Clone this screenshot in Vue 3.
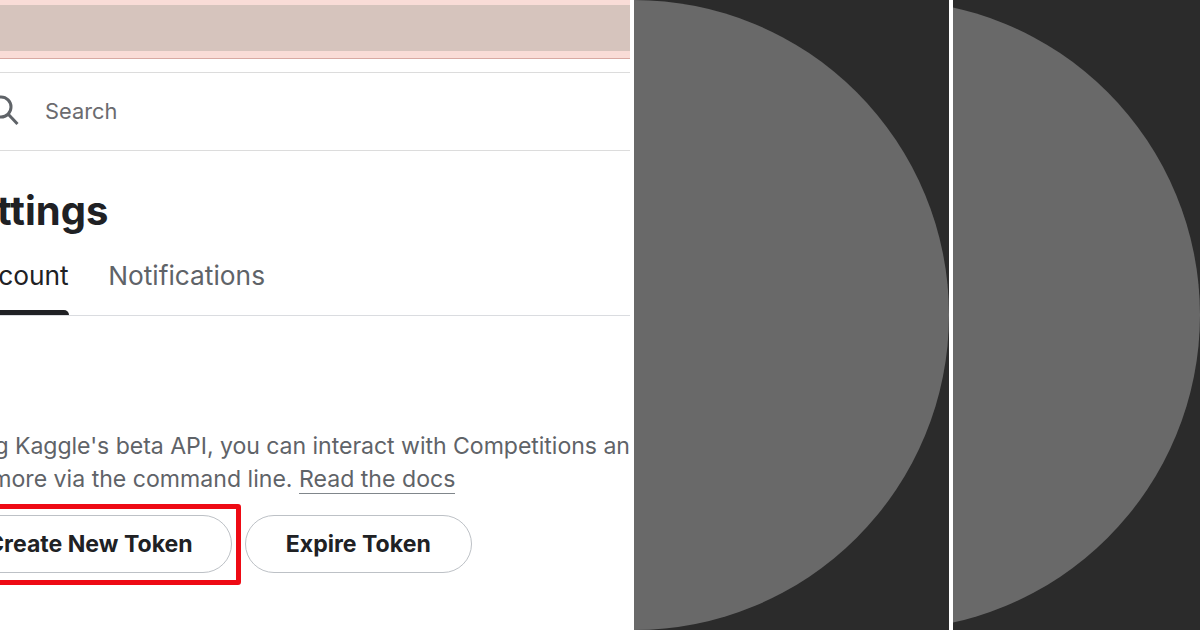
<script setup>
const tabs = ['Account', 'Notifications']
</script>

<template>
  <div class="page">
    <section class="left">
      <div class="inner">
        <div class="banner"><div class="banner-fill"></div></div>
        <div class="search">
          <svg class="search-icon" width="30" height="34" viewBox="0 0 30 34" fill="none" stroke="#5f6368" stroke-width="3">
            <circle cx="11" cy="12" r="10" />
            <path d="M18.5 19.5l9 9.5" />
          </svg>
          <span class="search-text">Search</span>
        </div>
        <h1 class="title">Settings</h1>
        <nav class="tabs">
          <span v-for="(t, i) in tabs" :key="t" class="tab" :class="{ active: i === 0 }">{{ t }}</span>
        </nav>
        <p class="copy">
          <span class="line first">Using Kaggle's beta API, you can interact with Competitions an</span>
          <span class="line second">and more via the command line. <a class="link">Read the docs</a></span>
        </p>
        <div class="actions">
          <div class="marked">
            <button class="btn create">Create New Token</button>
            <span class="mark"></span>
          </div>
          <button class="btn">Expire Token</button>
        </div>
      </div>
    </section>
    <section class="panel one"><div class="disc"></div></section>
    <section class="panel two"><div class="disc"></div></section>
  </div>
</template>

<style scoped>
.page {
  display: flex;
  width: 1200px;
  height: 630px;
  overflow: hidden;
  background: #fff;
  font-family: Inter, "Liberation Sans", sans-serif;
}
.left {
  width: 634px;
  flex: none;
}
.inner {
  width: 630px;
  height: 630px;
  overflow: hidden;
}
.banner {
  height: 59px;
  box-sizing: border-box;
  padding: 5px 0 7px;
  background: #f9dcd7;
  border-bottom: 1px solid #d8a9a3;
}
.banner-fill {
  height: 46px;
  background: #d6c4bd;
}
.search {
  display: flex;
  align-items: center;
  height: 79px;
  margin-top: 13px;
  box-sizing: border-box;
  border-top: 1px solid #dcdcdc;
  border-bottom: 1px solid #dcdcdc;
}
.search-icon {
  margin-left: -10px;
  flex: none;
}
.search-text {
  margin-left: 25px;
  margin-bottom: 2px;
  font-size: 21.8px;
  color: #6b6b6f;
}
.title {
  margin: 37px 0 0 -53px;
  font-size: 40px;
  line-height: 46px;
  font-weight: 700;
  color: #202124;
}
.tabs {
  display: flex;
  gap: 39.5px;
  height: 61px;
  margin: 21px 0 0 -35px;
  box-sizing: border-box;
  border-bottom: 1px solid #dadce0;
}
.tab {
  position: relative;
  font-size: 26.3px;
  line-height: 42px;
  color: #5f6368;
}
.tab.active {
  color: #202124;
}
.tab.active::after {
  content: "";
  position: absolute;
  left: 0;
  right: 0;
  top: 55px;
  height: 5px;
  background: #202124;
  border-radius: 5px 5px 0 0;
}
.copy {
  margin: 114px 0 0;
  font-size: 23.1px;
  line-height: 33px;
  color: #5f6368;
  white-space: nowrap;
}
.line {
  display: block;
}
.first {
  margin-left: -54px;
  letter-spacing: -0.05px;
}
.second {
  margin-left: -56px;
}
.link {
  border-bottom: 1px solid #80868b;
}
.actions {
  display: flex;
  gap: 13px;
  margin: 19px 0 0 -56px;
}
.marked {
  position: relative;
  display: flex;
}
.mark {
  position: absolute;
  top: -11px;
  right: -9px;
  bottom: -12px;
  left: -20px;
  border: 5px solid #ee0a14;
  border-radius: 3px;
}
.btn {
  height: 58px;
  padding: 0 40px;
  border: 1px solid #bdc1c6;
  border-radius: 29px;
  background: #fff;
  font: 700 23.1px Inter, "Liberation Sans", sans-serif;
  color: #202124;
  white-space: nowrap;
}
.create {
  padding: 0 38px 0 42px;
}
.panel {
  position: relative;
  background: #2b2b2b;
  overflow: hidden;
  height: 630px;
  flex: none;
}
.one {
  width: 315px;
}
.two {
  width: 247px;
  margin-left: 4px;
}
.disc {
  position: absolute;
  top: 0;
  width: 630px;
  height: 630px;
  background: #696969;
  border-radius: 50%;
}
.one .disc {
  left: -315px;
}
.two .disc {
  left: -383px;
}
</style>
